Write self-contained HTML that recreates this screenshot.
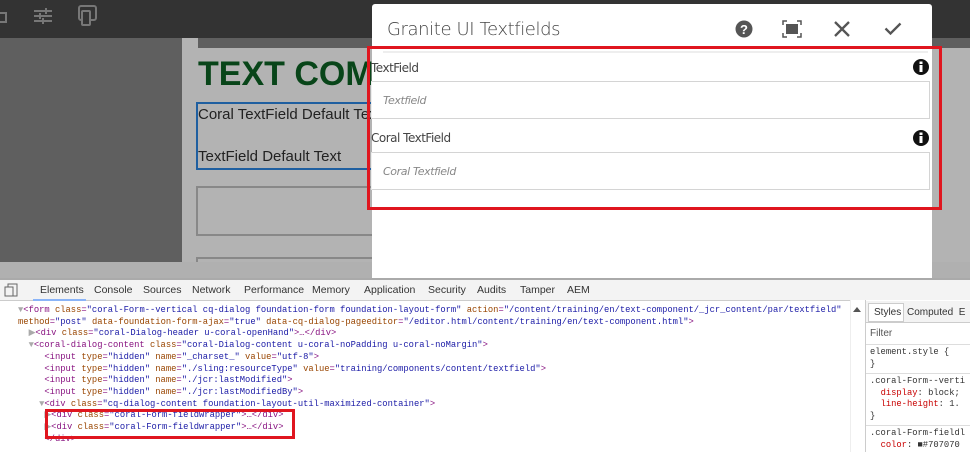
<!DOCTYPE html>
<html><head><meta charset="utf-8"><style>
*{margin:0;padding:0;box-sizing:border-box}
body{width:970px;height:452px;overflow:hidden;position:relative;background:#5f5f5f;font-family:"Liberation Sans",sans-serif}
.a{position:absolute}
.mono{font-family:"Liberation Mono",monospace;font-size:8.8px;white-space:pre;color:#881280}
.n{color:#994500}.v{color:#1a1aa6}.g{color:#aaa}
.tab{position:absolute;top:284px;font-size:10.5px;color:#333}
</style></head><body>
<div class="a" style="left:0;top:0;width:970px;height:38px;background:#333"></div>
<div class="a" style="left:-4px;top:12px;width:11px;height:11px;border:2px solid #777"></div>
<svg class="a" style="left:33px;top:6px" width="20" height="20"><g stroke="#777" stroke-width="2"><line x1="1" y1="5" x2="19" y2="5"/><line x1="1" y1="10" x2="19" y2="10"/><line x1="1" y1="15" x2="19" y2="15"/><line x1="13" y1="2" x2="13" y2="8"/><line x1="7" y1="7" x2="7" y2="13"/><line x1="10" y1="12" x2="10" y2="18"/></g></svg>
<svg class="a" style="left:78px;top:5px" width="20" height="22"><rect x="1" y="1" width="17" height="14" rx="2" fill="none" stroke="#777" stroke-width="2"/><rect x="4" y="6" width="8" height="14" rx="1" fill="#333" stroke="#777" stroke-width="2"/></svg>
<div class="a" style="left:0;top:38px;width:970px;height:224px;background:#5f5f5f"></div>
<div class="a" style="left:182px;top:38px;width:800px;height:224px;background:#b3b3b3"></div>
<div class="a" style="left:198px;top:38px;width:800px;height:10px;background:#5f5f5f"></div>
<div class="a" style="left:198px;top:55px;font-size:34px;font-weight:bold;color:#084519;font-family:'Liberation Sans',sans-serif">TEXT COMPONENT</div>
<div class="a" style="left:196px;top:102px;width:600px;height:68px;border:2px solid #1f5fa0"></div>
<div class="a" style="left:198px;top:106px;font-size:15px;color:#222">Coral TextField Default Text</div>
<div class="a" style="left:198px;top:148px;font-size:15px;color:#222">TextField Default Text</div>
<div class="a" style="left:196px;top:186px;width:600px;height:50px;border:2px solid #888"></div>
<div class="a" style="left:196px;top:257px;width:600px;height:20px;border:2px solid #888"></div>
<div class="a" style="left:0;top:262px;width:970px;height:16px;background:#b0b0b0"></div>
<div class="a" style="left:372px;top:4px;width:560px;height:276px;background:#fff;border-radius:3px 3px 0 0"></div>
<div class="a" style="left:387px;top:19px;font-size:18px;color:#444;font-family:'DejaVu Sans',sans-serif;font-weight:300;letter-spacing:-0.4px">Granite UI Textfields</div>
<svg class="a" style="left:734px;top:19px" width="20" height="20"><circle cx="10" cy="10" r="8.5" fill="#555"/><text x="10" y="15" text-anchor="middle" font-family="Liberation Sans" font-weight="bold" font-size="13" fill="#fff">?</text></svg>
<svg class="a" style="left:782px;top:20px" width="20" height="18"><path d="M1 5V1h4M15 1h4v4M19 13v4h-4M5 17H1v-4" fill="none" stroke="#555" stroke-width="1.5"/><rect x="4" y="4" width="12" height="10" fill="#555"/></svg>
<svg class="a" style="left:833px;top:20px" width="18" height="18"><path d="M2 2L16 16M16 2L2 16" stroke="#555" stroke-width="2.3"/></svg>
<svg class="a" style="left:884px;top:22px" width="18" height="14"><path d="M1.5 6.5L6.5 11.5L16.5 1.5" fill="none" stroke="#555" stroke-width="2.3"/></svg>
<div class="a" style="left:383px;top:51px;width:545px;height:2px;background:#eee"></div>
<div class="a" style="left:371px;top:61px;font-size:12px;color:#444;font-family:'DejaVu Sans',sans-serif;letter-spacing:-0.5px">TextField</div>
<svg class="a" style="left:912px;top:58px" width="18" height="18"><circle cx="9" cy="9" r="8" fill="#111"/><rect x="7.5" y="7" width="3" height="7" fill="#fff"/><rect x="7.5" y="3.5" width="3" height="2.5" fill="#fff"/></svg>
<div class="a" style="left:371px;top:81px;width:559px;height:38px;border:1px solid #d4d4d4;border-left-color:#eee"></div>
<div class="a" style="left:383px;top:94px;font-size:11px;color:#888;font-style:italic;font-family:'DejaVu Sans',sans-serif;letter-spacing:-0.4px">Textfield</div>
<div class="a" style="left:371px;top:131px;font-size:12px;color:#444;font-family:'DejaVu Sans',sans-serif;letter-spacing:-0.5px">Coral TextField</div>
<svg class="a" style="left:912px;top:129px" width="18" height="18"><circle cx="9" cy="9" r="8" fill="#111"/><rect x="7.5" y="7" width="3" height="7" fill="#fff"/><rect x="7.5" y="3.5" width="3" height="2.5" fill="#fff"/></svg>
<div class="a" style="left:371px;top:152px;width:559px;height:38px;border:1px solid #d4d4d4;border-left-color:#eee"></div>
<div class="a" style="left:383px;top:165px;font-size:11px;color:#888;font-style:italic;font-family:'DejaVu Sans',sans-serif;letter-spacing:-0.4px">Coral Textfield</div>
<div class="a" style="left:367px;top:46px;width:575px;height:164px;border:3px solid #e0161f"></div>
<div class="a" style="left:0;top:278px;width:970px;height:174px;background:#fff;border-top:2px solid #aaa"></div>
<div class="a" style="left:0;top:280px;width:970px;height:21px;background:#f3f3f3;border-bottom:1px solid #ccc"></div>
<svg class="a" style="left:4px;top:283px" width="14" height="14"><rect x="1" y="4" width="8" height="9" fill="none" stroke="#666"/><path d="M4 4V1h9v12H9" fill="none" stroke="#666"/></svg>
<div class="a" style="left:33px;top:299px;width:53px;height:2px;background:#8ab4f8"></div>
<div class="tab" style="left:40px">Elements</div><div class="tab" style="left:94px">Console</div><div class="tab" style="left:143px">Sources</div><div class="tab" style="left:192px">Network</div><div class="tab" style="left:244px">Performance</div><div class="tab" style="left:312px">Memory</div><div class="tab" style="left:364px">Application</div><div class="tab" style="left:428px">Security</div><div class="tab" style="left:477px">Audits</div><div class="tab" style="left:520px">Tamper</div><div class="tab" style="left:567px">AEM</div>
<div class="a mono" style="left:18px;top:305px;line-height:11.7px"><span class="g">▼</span>&lt;form <span class="n">class</span>=<span class="v">"coral-Form--vertical cq-dialog foundation-form foundation-layout-form"</span> <span class="n">action</span>=<span class="v">"/content/training/en/text-component/_jcr_content/par/textfield"</span>
<span class="n">method</span>=<span class="v">"post"</span> <span class="n">data-foundation-form-ajax</span>=<span class="v">"true"</span> <span class="n">data-cq-dialog-pageeditor</span>=<span class="v">"/editor.html/content/training/en/text-component.html"</span>&gt;
  <span class="g">▶</span>&lt;div <span class="n">class</span>=<span class="v">"coral-Dialog-header u-coral-openHand"</span>&gt;…&lt;/div&gt;
  <span class="g">▼</span>&lt;coral-dialog-content <span class="n">class</span>=<span class="v">"coral-Dialog-content u-coral-noPadding u-coral-noMargin"</span>&gt;
     &lt;input <span class="n">type</span>=<span class="v">"hidden"</span> <span class="n">name</span>=<span class="v">"_charset_"</span> <span class="n">value</span>=<span class="v">"utf-8"</span>&gt;
     &lt;input <span class="n">type</span>=<span class="v">"hidden"</span> <span class="n">name</span>=<span class="v">"./sling:resourceType"</span> <span class="n">value</span>=<span class="v">"training/components/content/textfield"</span>&gt;
     &lt;input <span class="n">type</span>=<span class="v">"hidden"</span> <span class="n">name</span>=<span class="v">"./jcr:lastModified"</span>&gt;
     &lt;input <span class="n">type</span>=<span class="v">"hidden"</span> <span class="n">name</span>=<span class="v">"./jcr:lastModifiedBy"</span>&gt;
    <span class="g">▼</span>&lt;div <span class="n">class</span>=<span class="v">"cq-dialog-content foundation-layout-util-maximized-container"</span>&gt;
     <span class="g">▶</span>&lt;div <span class="n">class</span>=<span class="v">"coral-Form-fieldwrapper"</span>&gt;…&lt;/div&gt;
     <span class="g">▶</span>&lt;div <span class="n">class</span>=<span class="v">"coral-Form-fieldwrapper"</span>&gt;…&lt;/div&gt;
     &lt;/div&gt;</div>
<div class="a" style="left:45px;top:409px;width:250px;height:30px;border:3px solid #e0161f"></div>
<div class="a" style="left:850px;top:300px;width:15px;height:152px;background:#fff;border-left:1px solid #eee"></div>
<div class="a" style="left:853px;top:307px;width:0;height:0;border:4px solid transparent;border-bottom:5px solid #555;border-top:0"></div>
<div class="a" style="left:865px;top:300px;width:105px;height:152px;background:#fff;border-left:1px solid #ccc"></div>
<div class="a" style="left:866px;top:301px;width:104px;height:22px;background:#f3f3f3;border-bottom:1px solid #ccc"></div>
<div class="a" style="left:868px;top:303px;width:36px;height:19px;border:1px solid #ccc;background:#fff"></div>
<div class="a" style="left:874px;top:307px;font-size:10px;color:#333">Styles</div>
<div class="a" style="left:907px;top:307px;font-size:10px;color:#333">Computed&nbsp;&nbsp;E</div>
<div class="a" style="left:870px;top:328px;font-size:10px;color:#555">Filter</div>
<div class="a" style="left:866px;top:344px;width:104px;height:1px;background:#ddd"></div>
<div class="a mono" style="left:870px;top:347px;line-height:11.7px;color:#333">element.style {
}</div>
<div class="a" style="left:866px;top:373px;width:104px;height:1px;background:#ddd"></div>
<div class="a mono" style="left:870px;top:376px;line-height:11.7px;color:#333">.coral-Form--verti
  <span style="color:#c80000">display</span>: block;
  <span style="color:#c80000">line-height</span>: 1.
}</div>
<div class="a" style="left:866px;top:425px;width:104px;height:1px;background:#ddd"></div>
<div class="a mono" style="left:870px;top:428px;line-height:11.7px;color:#333">.coral-Form-fieldl
  <span style="color:#c80000">color</span>: ■#707070</div>
</body></html>
